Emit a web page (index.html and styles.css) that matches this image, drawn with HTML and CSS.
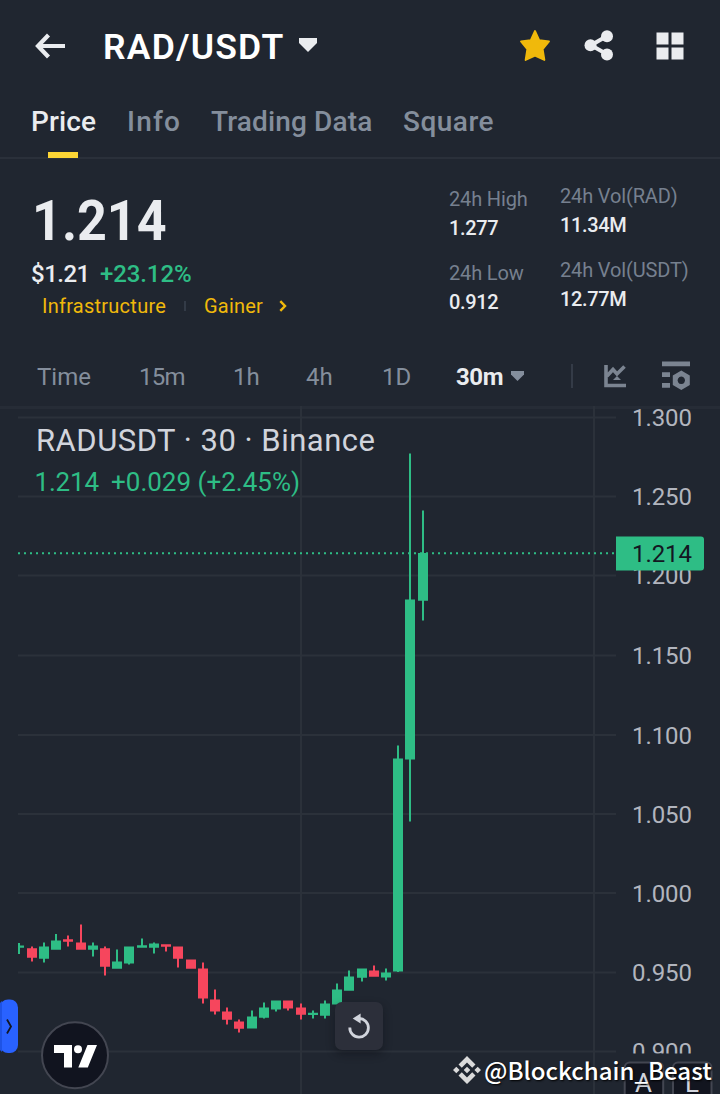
FILE: index.html
```html
<!DOCTYPE html>
<html lang="en">
<head>
<meta charset="utf-8">
<title>RAD/USDT</title>
<link rel="stylesheet" href="styles.css">
</head>
<body>
<main class="app">
  <header class="topbar">
    <svg class="back" width="32" height="26" viewBox="0 0 32 26"><path d="M31 13H4M14.500 2L4 13l10.500 11" fill="none" stroke="#eaecef" stroke-width="4.200"/></svg>
    <h1 class="pair">RAD/USDT</h1>
    <svg class="caret" width="18" height="14" viewBox="0 0 18 14"><path d="M0 0h18v5L9 14 0 5z" fill="#eaecef"/></svg>
    <div class="actions">
      <svg width="30" height="31" viewBox="0 0 30 31"><path d="M15 1l4.200 9.100 9.800 1.300-6.300 7.700 1.700 10.900L15 25.600 5.600 30l1.700-10.900L1 11.400l9.800-1.300z" fill="#f0b90b" stroke="#f0b90b" stroke-width="1.800" stroke-linejoin="round"/></svg>
      <svg width="30" height="31" viewBox="0 0 30 31"><g fill="#eaecef"><path d="M23 6L7 15.300l16 9" fill="none" stroke="#eaecef" stroke-width="4"/><circle cx="6.500" cy="15.300" r="6"/><circle cx="23" cy="6.200" r="6"/><circle cx="23" cy="24.600" r="6"/></g></svg>
      <svg width="28" height="28" viewBox="0 0 28 28"><path d="M.5.500h12v12H.5zM15.500.500h12v12h-12zM.5 15.500h12v12H.5zM15.500 15.500h12v12h-12z" fill="#eaecef"/></svg>
    </div>
  </header>

  <nav class="tabs">
    <span class="tab tab-price active">Price</span>
    <span class="tab tab-info">Info</span>
    <span class="tab tab-data">Trading Data</span>
    <span class="tab tab-square">Square</span>
  </nav>

  <section class="overview">
    <div class="quote">
      <div class="last">1.214</div>
      <div class="sub"><span class="usd">$1.21</span><span class="change">+23.12%</span></div>
      <div class="tags">
        <span class="tag-infra">Infrastructure</span><i class="sep"></i><span class="tag-gain">Gainer</span>
        <svg class="chev" width="8" height="12" viewBox="0 0 8 12"><path d="M1.300 1.200L6 6l-4.700 4.800" fill="none" stroke="#f0b90b" stroke-width="2.400"/></svg>
      </div>
    </div>
    <dl class="stats">
      <dt>24h High</dt><dd>1.277</dd>
      <dt>24h Low</dt><dd>0.912</dd>
    </dl>
    <dl class="stats stats-vol">
      <dt>24h Vol(RAD)</dt><dd>11.34M</dd>
      <dt>24h Vol(USDT)</dt><dd>12.77M</dd>
    </dl>
  </section>

  <nav class="frames">
    <span>Time</span><span class="m15">15m</span><span>1h</span><span>4h</span><span>1D</span>
    <span class="current">30m <svg width="13" height="10" viewBox="0 0 13 10"><path d="M0 0h13v3.500L6.500 10 0 3.500z" fill="#848e9c"/></svg></span>
    <i class="divider"></i>
    <svg class="ico-chart" width="22" height="24" viewBox="0 0 22 24"><path d="M2 1v20.500h20M3 12l6-6.500 4 4.500L20.500 2.500" fill="none" stroke="#7b8491" stroke-width="3.600"/><path d="M13 12l4 4H9z" fill="#7b8491"/></svg>
    <svg class="ico-set" width="28" height="30" viewBox="0 0 28 30"><path d="M0 .500h28v4.700H0zM0 11.300h8V16H0zM0 22h8v4.700H0z" fill="#7b8491"/><path fill-rule="evenodd" d="M19.300 9.500l8.500 5v9.500l-8.500 5-8.500-5v-9.500zM19.300 15.600a3.700 3.700 0 1 0 .01 0z" fill="#7b8491"/></svg>
  </nav>

  <section class="chart">
    <svg class="plot" width="720" height="688" viewBox="0 406 720 688">
      <rect class="edge" y="406" width="720" height="3"/>
      <g class="grid">
        <path d="M18 417.500H616M18 496.500H616M18 575.500H616M18 655.500H616M18 735H616M18 814H616M18 893H616M18 972.500H616M18 1051.500H616M301 406V1094M594 406V1094"/>
      </g>
      <path class="price-line" d="M18 553.300H616"/>
      <g class="up">
        <path d="M18 943h2v11h-2zM18 945.500h6v2.300h-6zM43 942.500h2v20h-2zM39 946.500h10v12.300h-10zM55 934h2v8h-2zM51 940.500h10v9.200h-10zM92 942.500h2v14h-2zM88 945.500h10v4.300h-10zM116 949.500h2v15h-2zM112 961.500h10v7.300h-10zM128 950h2v14.500h-2zM124 946.500h10v17h-10zM141 938.500h2v9h-2zM137 945.300h10v2.400h-10zM153 942.500h2v11h-2zM149 943.500h10v4.300h-10z"/>
        <path d="M251 1010.500h2v10h-2zM247 1016.500h10v12h-10zM263 1002.500h2v16h-2zM259 1007.500h10v10.200h-10zM275 1002h2v9.500h-2zM271 1000.500h10v9h-10zM312 1010.500h2v8h-2zM308 1012.700h10v2.400h-10zM324 1000.500h2v18h-2zM320 1003.500h10v12.300h-10zM336 983.500h2v10h-2zM332 989.500h10v15h-10zM348 970.500h2v10h-2zM344 976.500h10v14.200h-10zM361 970h2v11.500h-2zM357 968.500h10v9.200h-10zM385 968.500h2v12h-2zM381 972.500h10v5h-10z"/>
        <path d="M397 745.500h2v226.500h-2zM393 758.500h10v213h-10zM409 453.500h2v368h-2zM405 599.500h10v160h-10zM422 510.500h2v110h-2zM418 553h10v47.700h-10z"/>
      </g>
      <g class="down">
        <path d="M31 946.500h2v15h-2zM27 948.300h10v9.500h-10zM67 935.500h2v11h-2zM63 939.300h10v2.400h-10zM80 924.500h2v20h-2zM76 942.500h10v7.200h-10zM104 946.500h2v29h-2zM100 948.300h10v18.500h-10zM165 944.500h2v7h-2zM161 944.300h10v2.400h-10zM177 947h2v20.500h-2zM173 946.500h10v12.300h-10zM186 959.500h10v9.200h-10zM202 962.500h2v41h-2zM198 968.500h10v30h-10z"/>
        <path d="M214 989.500h2v25h-2zM210 999.500h10v12h-10zM226 1007.500h2v17h-2zM222 1011.500h10v8.200h-10zM238 1019.500h2v13h-2zM234 1021.500h10v7.200h-10zM287 1002h2v8.500h-2zM283 1000.500h10v8h-10zM300 1003.500h2v16h-2zM296 1007.500h10v7.200h-10zM373 965.500h2v8h-2zM369 970.500h10v6.300h-10z"/>
      </g>
      <g class="axis">
        <text x="632" y="426.400" textLength="60">1.300</text>
        <text x="632" y="505.400" textLength="60">1.250</text>
        <text x="632" y="584.400" textLength="60">1.200</text>
        <text x="632" y="664.400" textLength="60">1.150</text>
        <text x="632" y="743.600" textLength="60">1.100</text>
        <text x="632" y="822.600" textLength="60">1.050</text>
        <text x="632" y="901.600" textLength="60">1.000</text>
        <text x="632" y="981.200" textLength="60">0.950</text>
        <text x="632" y="1060.300" textLength="60">0.900</text>
      </g>
      <rect class="cover" x="617" y="1053.500" width="103" height="41"/>
      <path d="M616 536.500h85a3 3 0 0 1 3 3V567.500a3 3 0 0 1-3 3h-85z" fill="#2ebd85"/>
      <text class="tagged" x="632" y="562.400" textLength="60">1.214</text>
      <text class="title" x="36" y="450.500" textLength="339">RADUSDT · 30 · Binance</text>
      <text class="legend" x="34.500" y="490.500" textLength="64.500">1.214</text>
      <text class="legend" x="111" y="490.500" textLength="189">+0.029 (+2.45%)</text>
      <g class="scale">
        <rect x="624.700" y="1062.500" width="38.500" height="42" rx="5"/>
        <rect x="673" y="1062.500" width="38.500" height="42" rx="5"/>
        <text x="635" y="1092">A</text>
        <text x="685" y="1092">L</text>
      </g>
      <circle cx="75" cy="1055.300" r="33" fill="#11141f" stroke="#434651" stroke-width="2"/>
      <g fill="#fff"><path d="M54 1045h18v22.500h-8V1053H54zM87.500 1045H97l-9.200 22.500h-9.500z"/><circle cx="78" cy="1049.300" r="4"/></g>
      <rect x="0" y="999.500" width="18" height="53.500" rx="8" fill="#2962ff"/>
      <path d="M0 1003v47a8 8 0 0 0 2 2V1001a8 8 0 0 0-2 2z" fill="#1e53e5"/>
      <path d="M7 1019.500l4 7-4 7" fill="none" stroke="#131722" stroke-width="1.800"/>
    </svg>
    <button class="reset" aria-label="Reset chart"><svg width="24" height="28" viewBox="0 0 24 28"><path d="M2.800 15.500A9.300 9.300 0 1 0 12 6.500" fill="none" stroke="#d1d4dc" stroke-width="2.800"/><path d="M13.600 1.500v10L5.700 6.500z" fill="#d1d4dc"/></svg></button>
    <div class="watermark">
      <svg width="28" height="28" viewBox="0 0 28 28"><path d="M14 0l8.500 8.500-3.300 3.300L14 6.600l-5.200 5.200-3.300-3.300zM14 28l-8.500-8.500 3.300-3.300 5.200 5.200 5.200-5.200 3.300 3.300zM3.300 10.700L6.600 14l-3.300 3.300L0 14zM24.700 10.700L28 14l-3.300 3.300-3.300-3.300zM14 10.700l3.300 3.300-3.300 3.300-3.300-3.300z" fill="#dadada"/></svg>
      <span>@Blockchain_Beast</span>
    </div>
  </section>
</main>
</body>
</html>
```

FILE: styles.css
```css
* { box-sizing: border-box; }
body { margin: 0; background: #202630; color: #eaecef; font-family: Roboto, sans-serif; }
.app { width: 720px; height: 1094px; overflow: hidden; display: flex; flex-direction: column; }
svg { display: block; flex: none; }

.topbar { height: 94px; display: flex; align-items: center; padding: 0 36px 3px 34px; }
.pair { margin: 3px 0 0 37px; width: 200px; font-size: 35.500px; line-height: 40px; font-weight: 600; letter-spacing: 1.200px; color: #fff; }
.caret { margin-top: -1px; margin-left: -4px; }
.actions { margin-left: auto; display: flex; align-items: center; gap: 34px; }
.actions svg:last-child { margin-left: 8px; }

.tabs { position: relative; height: 65px; padding: 14px 0 0 31px; border-bottom: 2px solid #2a303a; display: grid; grid-template-columns: 96px 84px 192px auto; }
.tab { position: relative; font-size: 28px; line-height: 28px; font-weight: 500; color: #848e9c; white-space: nowrap; }
.tab-price { letter-spacing: .1px; }
.tab-info { letter-spacing: 1.200px; }
.tab-data { letter-spacing: .150px; }
.tab-square { letter-spacing: .500px; }
.active { color: #eaecef; }
.active::after { content: ""; position: absolute; left: 17px; top: 43.500px; width: 30px; height: 6px; background: #fcd535; }

.overview { height: 186px; display: grid; grid-template-columns: 418px 111px 1fr; padding-left: 31px; }
.quote { display: flex; flex-direction: column; padding-top: 34px; }
.last { font-size: 56px; line-height: 56px; font-weight: 700; margin-left: 1px; transform: scaleX(.93); transform-origin: 0 50%; }
.sub { display: flex; margin-top: 13px; font-size: 24px; line-height: 24px; font-weight: 500; }
.usd { width: 69px; letter-spacing: -.5px; }
.change { color: #2ebd85; letter-spacing: -.100px; }
.tags { display: flex; align-items: center; margin: 9px 0 0 11px; font-size: 20px; line-height: 22px; color: #f0b90b; }
.tag-infra { width: 142px; letter-spacing: .250px; }
.sep { width: 2px; height: 10px; background: #333b47; margin-right: 18px; }
.tag-gain { width: 75px; letter-spacing: .200px; }
.stats { margin: 0; padding-top: 29px; font-size: 20px; line-height: 22px; white-space: nowrap; }
.stats-vol { padding-top: 26px; }
.stats dt { color: #76808f; letter-spacing: -.150px; }
.stats dd { margin: 7px 0 23px; font-weight: 500; letter-spacing: -.350px; }

.frames { height: 61px; display: grid; grid-template-columns: 102px 94px 73px 76px 74px 115px 33px 58px 1fr; align-items: center; padding: 2px 0 0 37px; font-size: 24px; line-height: 26px; color: #848e9c; }
.frames .m15 { letter-spacing: -.7px; }
.frames .current { display: flex; align-items: center; gap: 8px; color: #eaecef; font-weight: 700; letter-spacing: -.4px; }
.current svg { margin-top: -2px; }
.ico-chart, .ico-set { margin-top: -1px; }
.divider { width: 2px; height: 24px; margin-top: -2px; background: #343b47; }

.chart { position: relative; height: 688px; }
.edge { fill: #262c36; }
.grid path { fill: none; stroke: #2b313a; stroke-width: 2; }
.price-line { stroke: #2ebd85; stroke-width: 2; stroke-dasharray: 2 4; }
.up { fill: #2ebd85; }
.down { fill: #f6465d; }
.axis { font-size: 24px; fill: #b2b5be; }
.cover { fill: #202630; }
.tagged { font-size: 24px; fill: #131722; }
.title { font-size: 31px; fill: #d1d4dc; }
.legend { font-size: 26px; fill: #2ebd85; }
.scale rect { fill: #12151f; stroke: #434651; stroke-width: 2; }
.scale text { font-size: 26px; fill: #d1d4dc; }
.reset { position: absolute; left: 335px; top: 596px; width: 48px; height: 47.500px; border: 0; border-radius: 7px; background: #2c2f3a; display: grid; place-items: center; padding: 0; box-shadow: 0 4px 8px rgba(10, 13, 20, .45); }
.watermark { position: absolute; left: 453px; top: 644px; display: flex; align-items: center; gap: 3px; color: #fff; font: 500 24.100px/40px "Noto Sans CJK SC", sans-serif; white-space: nowrap; }
.watermark span { text-shadow: 1px 1px 2px #000; }
```
